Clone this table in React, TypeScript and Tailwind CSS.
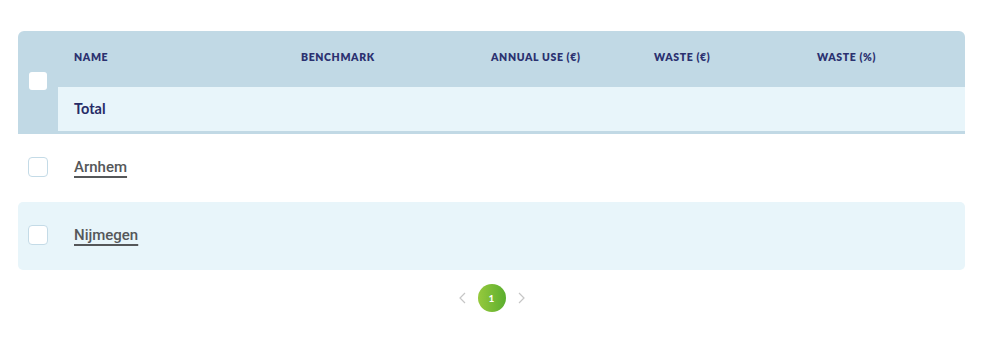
import React from "react";

const cols = "grid grid-cols-[227px_190px_163px_163px_1fr]";

function Row({ name, shaded }: { name: string; shaded?: boolean }) {
  return (
    <div
      className={`flex h-[68px] items-center rounded-[5px] ${shaded ? "bg-[#e8f5fa]" : "bg-white"}`}
    >
      <div className="flex w-[40px] justify-center pb-[3px]">
        <div className="h-[20px] w-[20px] rounded-[4px] border border-[#c4dbe7] bg-white" />
      </div>
      <div className={`${cols} flex-1 pb-[4px]`}>
        <div className="pl-4">
          <a
            href="#"
            className="text-[15px] font-medium text-[#555759] underline decoration-[2px] underline-offset-[4px]"
            style={{ fontFamily: "Roboto, sans-serif" }}
          >
            {name}
          </a>
        </div>
      </div>
    </div>
  );
}

export default function App() {
  const heads = ["NAME", "BENCHMARK", "ANNUAL USE (€)", "WASTE (€)", "WASTE (%)"];
  return (
    <div className="min-h-[337px] w-[982px] bg-white pl-[18px] pr-[17px] pt-[31px]" style={{ fontFamily: "Lato, sans-serif" }}>
      <div className="flex rounded-t-[6px] bg-[#c1d9e5] pb-[3px]">
        <div className="flex w-[40px] items-center justify-center">
          <div className="h-[18px] w-[18px] rounded-[3px] bg-white" />
        </div>
        <div className="flex-1">
          <div className={`${cols} h-[56px] items-center pb-[2px]`}>
            {heads.map((h) => (
              <div key={h} className="pl-4 text-[10.5px] font-extrabold tracking-[0.06em] text-[#2b3170]">
                {h}
              </div>
            ))}
          </div>
          <div className={`${cols} h-[44px] items-center bg-[#e8f5fa]`}>
            <div className="pl-4 text-[14.5px] font-bold text-[#262b66]">Total</div>
          </div>
        </div>
      </div>
      <Row name="Arnhem" />
      <Row name="Nijmegen" shaded />
      <div className="mt-[14px] flex items-center justify-center gap-[8px]">
        <svg width="14" height="14" viewBox="0 0 14 14" className="text-[#c6c6c6]">
          <path d="M9 2 L4 7 L9 12" fill="none" stroke="currentColor" strokeWidth="1.2" />
        </svg>
        <div className="flex h-[28px] w-[28px] items-center justify-center rounded-full bg-gradient-to-r from-[#96c93d] to-[#5aae2e] text-[10px] font-bold text-white">
          1
        </div>
        <svg width="14" height="14" viewBox="0 0 14 14" className="text-[#c6c6c6]">
          <path d="M5 2 L10 7 L5 12" fill="none" stroke="currentColor" strokeWidth="1.2" />
        </svg>
      </div>
    </div>
  );
}
